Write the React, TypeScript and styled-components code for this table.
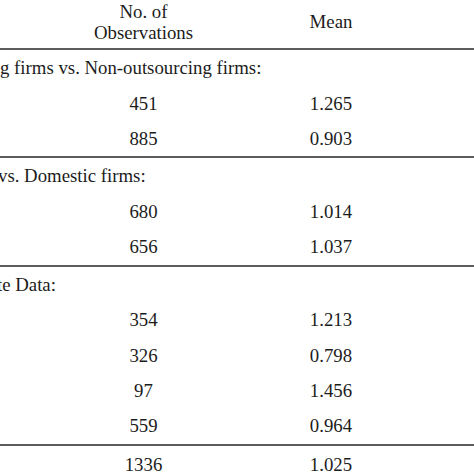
import React from "react"
import styled, { createGlobalStyle } from "styled-components"

const GlobalStyle = createGlobalStyle`
  html, body {
    margin: 0;
    padding: 0;
    background: #ffffff;
  }
  body {
    font-family: "Liberation Serif", "Times New Roman", serif;
    color: #1c1c1c;
    overflow: hidden;
  }
`

const Page = styled.div`
  width: 474px;
  height: 474px;
  overflow: hidden;
  background: #fff;
`

const Table = styled.div`
  display: flex;
  flex-direction: column;
  font-size: 18.8px;
`

const Row = styled.div<{ $h: number }>`
  display: grid;
  grid-template-columns: 50px 187px 188px 1fr;
  align-items: center;
  height: ${(p) => p.$h}px;
`

const HeaderRow = styled(Row)`
  padding-bottom: 5px;
  box-sizing: border-box;
  border-bottom: 2px solid #5c5c5c;
`

const Cell = styled.div`
  text-align: center;
  white-space: nowrap;
`

const HeadCell = styled(Cell)`
  line-height: 21px;
`

const Rule = styled.div`
  height: 2px;
  background: #5c5c5c;
`

const SectionRow = styled.div<{ $h: number }>`
  height: ${(p) => p.$h}px;
  display: flex;
  align-items: center;
  white-space: nowrap;
`

const SectionLabel = styled.span<{ $shift: number }>`
  margin-left: ${(p) => p.$shift}px;
`

type Section = {
  label: string
  shift: number
  rows: [string, string][]
}

const sections: Section[] = [
  {
    label: "g firms vs. Non-outsourcing firms:",
    shift: 0,
    rows: [
      ["451", "1.265"],
      ["885", "0.903"],
    ],
  },
  {
    label: "vs. Domestic firms:",
    shift: -2,
    rows: [
      ["680", "1.014"],
      ["656", "1.037"],
    ],
  },
  {
    label: "te Data:",
    shift: -3,
    rows: [
      ["354", "1.213"],
      ["326", "0.798"],
      ["97", "1.456"],
      ["559", "0.964"],
    ],
  },
]

const App: React.FC = () => {
  return (
    <Page>
      <GlobalStyle />
      <Table>
        <HeaderRow $h={50}>
          <span />
          <HeadCell>
            No. of
            <br />
            Observations
          </HeadCell>
          <HeadCell>Mean</HeadCell>
          <span />
        </HeaderRow>

        {sections.map((s) => (
          <React.Fragment key={s.label}>
            <SectionRow $h={36}>
              <SectionLabel $shift={s.shift}>{s.label}</SectionLabel>
            </SectionRow>
            {s.rows.map(([n, m]) => (
              <Row $h={35.2} key={n}>
                <span />
                <Cell>{n}</Cell>
                <Cell>{m}</Cell>
                <span />
              </Row>
            ))}
            <Rule />
          </React.Fragment>
        ))}

        <Row $h={38}>
          <span />
          <Cell>1336</Cell>
          <Cell>1.025</Cell>
          <span />
        </Row>
      </Table>
    </Page>
  )
}

export default App
